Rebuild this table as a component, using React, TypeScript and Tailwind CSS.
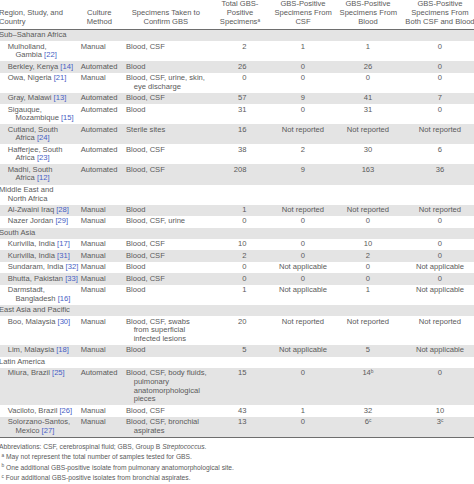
import React from "react";

type Region = { kind: "region"; label: string[]; shade: boolean };
type Study = {
  kind: "study";
  name: string[];
  cite: string;
  method: string;
  specimens: string[];
  total: string;
  csf: string;
  blood: string;
  both: string;
  shade: boolean;
};
type Row = Region | Study;

const NR = "Not reported";
const NA = "Not applicable";

const rows: Row[] = [
  { kind: "region", label: ["Sub–Saharan Africa"], shade: true },
  { kind: "study", name: ["Mulholland,", "Gambia"], cite: "22", method: "Manual", specimens: ["Blood, CSF"], total: "2", csf: "1", blood: "1", both: "0", shade: false },
  { kind: "study", name: ["Berkley, Kenya"], cite: "14", method: "Automated", specimens: ["Blood"], total: "26", csf: "0", blood: "26", both: "0", shade: true },
  { kind: "study", name: ["Owa, Nigeria"], cite: "21", method: "Manual", specimens: ["Blood, CSF, urine, skin,", "eye discharge"], total: "0", csf: "0", blood: "0", both: "0", shade: false },
  { kind: "study", name: ["Gray, Malawi"], cite: "13", method: "Automated", specimens: ["Blood, CSF"], total: "57", csf: "9", blood: "41", both: "7", shade: true },
  { kind: "study", name: ["Sigauque,", "Mozambique"], cite: "15", method: "Automated", specimens: ["Blood"], total: "31", csf: "0", blood: "31", both: "0", shade: false },
  { kind: "study", name: ["Cutland, South", "Africa"], cite: "24", method: "Automated", specimens: ["Sterile sites"], total: "16", csf: NR, blood: NR, both: NR, shade: true },
  { kind: "study", name: ["Hafferjee, South", "Africa"], cite: "23", method: "Automated", specimens: ["Blood, CSF"], total: "38", csf: "2", blood: "30", both: "6", shade: false },
  { kind: "study", name: ["Madhi, South", "Africa"], cite: "12", method: "Automated", specimens: ["Blood, CSF"], total: "208", csf: "9", blood: "163", both: "36", shade: true },
  { kind: "region", label: ["Middle East and", "North Africa"], shade: false },
  { kind: "study", name: ["Al-Zwaini Iraq"], cite: "28", method: "Manual", specimens: ["Blood"], total: "1", csf: NR, blood: NR, both: NR, shade: true },
  { kind: "study", name: ["Nazer Jordan"], cite: "29", method: "Manual", specimens: ["Blood, CSF, urine"], total: "0", csf: "0", blood: "0", both: "0", shade: false },
  { kind: "region", label: ["South Asia"], shade: true },
  { kind: "study", name: ["Kurivilla, India"], cite: "17", method: "Manual", specimens: ["Blood, CSF"], total: "10", csf: "0", blood: "10", both: "0", shade: false },
  { kind: "study", name: ["Kurivilla, India"], cite: "31", method: "Manual", specimens: ["Blood, CSF"], total: "2", csf: "0", blood: "2", both: "0", shade: true },
  { kind: "study", name: ["Sundaram, India"], cite: "32", method: "Manual", specimens: ["Blood"], total: "0", csf: NA, blood: "0", both: NA, shade: false },
  { kind: "study", name: ["Bhutta, Pakistan"], cite: "33", method: "Manual", specimens: ["Blood, CSF"], total: "0", csf: "0", blood: "0", both: "0", shade: true },
  { kind: "study", name: ["Darmstadt,", "Bangladesh"], cite: "16", method: "Manual", specimens: ["Blood"], total: "1", csf: NA, blood: "1", both: NA, shade: false },
  { kind: "region", label: ["East Asia and Pacific"], shade: true },
  { kind: "study", name: ["Boo, Malaysia"], cite: "30", method: "Manual", specimens: ["Blood, CSF, swabs", "from superficial", "infected lesions"], total: "20", csf: NR, blood: NR, both: NR, shade: false },
  { kind: "study", name: ["Lim, Malaysia"], cite: "18", method: "Manual", specimens: ["Blood"], total: "5", csf: NA, blood: "5", both: NA, shade: true },
  { kind: "region", label: ["Latin America"], shade: false },
  { kind: "study", name: ["Miura, Brazil"], cite: "25", method: "Automated", specimens: ["Blood, CSF, body fluids,", "pulmonary", "anatomorphological", "pieces"], total: "15", csf: "0", blood: "14|b", both: "0", shade: true },
  { kind: "study", name: ["Vaciloto, Brazil"], cite: "26", method: "Manual", specimens: ["Blood, CSF"], total: "43", csf: "1", blood: "32", both: "10", shade: false },
  { kind: "study", name: ["Solorzano-Santos,", "Mexico"], cite: "27", method: "Manual", specimens: ["Blood, CSF, bronchial", "aspirates"], total: "13", csf: "0", blood: "6|c", both: "3|c", shade: true },
];

// small raised letter, kept out of the line box
const Sup = ({ children }: { children: React.ReactNode }) => (
  <span className="relative -top-[2.5px] text-[4.8px] leading-none">{children}</span>
);

// "14|b" -> 14 with superscript b
const Value = ({ v }: { v: string }) => {
  const [num, mark] = v.split("|");
  return (
    <>
      {num}
      {mark && <Sup>{mark}</Sup>}
    </>
  );
};

const Lines = ({ lines, last }: { lines: string[]; last?: React.ReactNode }) => (
  <>
    {lines.map((l, i) => (
      <React.Fragment key={i}>
        {i > 0 && <br />}
        {l}
        {i === lines.length - 1 && last}
      </React.Fragment>
    ))}
  </>
);

const cell = "px-[4px] py-[1.45px] align-top whitespace-nowrap";

const App = () => {
  return (
    <div className="w-[474px] h-[484px] overflow-hidden bg-white text-[#5a5a5a] font-['Liberation_Sans',Arial,sans-serif]">
      <div className="-ml-[1px] -mt-[3px] w-[481px]">
        <table className="table-fixed border-collapse w-[480.6px] text-[7.6px] leading-[8.6px]">
          <colgroup>
            <col className="w-[77.7px]" />
            <col className="w-[45.3px]" />
            <col className="w-[87.6px]" />
            <col className="w-[60.8px]" />
            <col className="w-[65.2px]" />
            <col className="w-[64.8px]" />
            <col className="w-[79.2px]" />
          </colgroup>

          {/* Column headings */}
          <thead>
            <tr className="border-b-[1.5px] border-[#6e6e6e] leading-[9.4px] font-normal">
              <th className="pr-[4px] pt-[1.5px] pb-[2px] align-bottom text-left font-normal whitespace-nowrap">
                Region, Study, and
                <br />
                Country
              </th>
              <th className="px-[4px] pt-[1.5px] pb-[2px] align-bottom text-center font-normal whitespace-nowrap">
                Culture
                <br />
                Method
              </th>
              <th className="px-[4px] pt-[1.5px] pb-[2px] align-bottom text-center font-normal whitespace-nowrap">
                Specimens Taken to
                <br />
                Confirm GBS
              </th>
              <th className="px-[4px] pt-[1.5px] pb-[2px] align-bottom text-center font-normal whitespace-nowrap">
                Total GBS-
                <br />
                Positive
                <br />
                Specimens<Sup>a</Sup>
              </th>
              <th className="px-[4px] pt-[1.5px] pb-[2px] align-bottom text-center font-normal whitespace-nowrap">
                GBS-Positive
                <br />
                Specimens From
                <br />
                CSF
              </th>
              <th className="px-[4px] pt-[1.5px] pb-[2px] align-bottom text-center font-normal whitespace-nowrap">
                GBS-Positive
                <br />
                Specimens From
                <br />
                Blood
              </th>
              <th className="px-[4px] pt-[1.5px] pb-[2px] align-bottom text-center font-normal whitespace-nowrap">
                GBS-Positive
                <br />
                Specimens From
                <br />
                Both CSF and Blood
              </th>
            </tr>
          </thead>

          <tbody className="border-b-[1.5px] border-[#6e6e6e]">
            {rows.map((r, i) =>
              r.kind === "region" ? (
                <tr key={i} className={r.shade ? "bg-[#e4e4e4]" : "bg-white"}>
                  <td className="pr-[4px] py-[1.45px] pl-[8.7px] -indent-[8.7px] align-top whitespace-nowrap">
                    <Lines lines={r.label} />
                  </td>
                  <td colSpan={6} />
                </tr>
              ) : (
                <tr key={i} className={r.shade ? "bg-[#e4e4e4]" : "bg-white"}>
                  <td className="pr-[4px] py-[1.45px] pl-[16.4px] -indent-[7.7px] align-top whitespace-nowrap">
                    <Lines
                      lines={r.name}
                      last={<span className="text-[#4660c4]"> [{r.cite}]</span>}
                    />
                  </td>
                  <td className={cell}>{r.method}</td>
                  <td className={`${cell} pl-[11.7px] -indent-[7.7px]`}>
                    <Lines lines={r.specimens} />
                  </td>
                  <td className={`${cell} text-center`}>
                    <span className="inline-block w-[13px] text-right">{r.total}</span>
                  </td>
                  <td className={`${cell} text-center`}>
                    <Value v={r.csf} />
                  </td>
                  <td className={`${cell} text-center`}>
                    <Value v={r.blood} />
                  </td>
                  <td className={`${cell} text-center`}>
                    <Value v={r.both} />
                  </td>
                </tr>
              )
            )}
          </tbody>
        </table>

        {/* Footnotes */}
        <div className="pt-[4px] text-[6.7px] leading-[10.5px] whitespace-nowrap">
          <p>
            Abbreviations: CSF, cerebrospinal fluid; GBS, Group B <i>Streptococcus</i>.
          </p>
          <p className="pl-[2.5px]">
            <Sup>a</Sup> May not represent the total number of samples tested for GBS.
          </p>
          <p className="pl-[2.5px]">
            <Sup>b</Sup> One additional GBS-positive isolate from pulmonary anatomorphological site.
          </p>
          <p className="pl-[2.5px]">
            <Sup>c</Sup> Four additional GBS-positive isolates from bronchial aspirates.
          </p>
        </div>
      </div>
    </div>
  );
};

export default App;
